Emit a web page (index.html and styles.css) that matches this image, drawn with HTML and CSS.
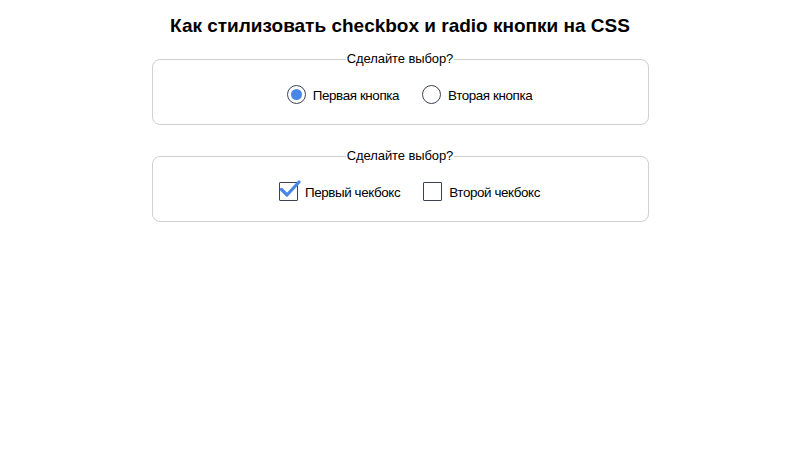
FILE: index.html
```html
<!DOCTYPE html>
<html lang="ru">
<head>
<meta charset="utf-8">
<title>Checkbox и radio</title>
<link rel="stylesheet" href="styles.css">
</head>
<body>
<h1 class="title">Как стилизовать checkbox и radio кнопки на CSS</h1>
<fieldset class="group">
  <legend class="legend">Сделайте выбор?</legend>
  <div class="options">
    <label class="option">
      <span class="radio"><span class="dot"></span></span>
      <span class="text">Первая кнопка</span>
    </label>
    <label class="option">
      <span class="radio"></span>
      <span class="text">Вторая кнопка</span>
    </label>
  </div>
</fieldset>
<fieldset class="group">
  <legend class="legend">Сделайте выбор?</legend>
  <div class="options">
    <label class="option">
      <span class="box">
        <svg class="tick" width="22" height="20" viewBox="0 0 22 20"><path d="M2.5 10.5 L8 16 L20 3" fill="none" stroke="#4a86e8" stroke-width="3.2" stroke-linecap="round" stroke-linejoin="round"/></svg>
      </span>
      <span class="text">Первый чекбокс</span>
    </label>
    <label class="option">
      <span class="box"></span>
      <span class="text">Второй чекбокс</span>
    </label>
  </div>
</fieldset>
</body>
</html>
```
FILE: styles.css
```css
* { box-sizing: border-box; }
body {
  margin: 0;
  padding: 14px 0 0;
  font-family: "Liberation Sans", Arial, sans-serif;
  color: #000;
  background: #fff;
}
.title {
  margin: 0 0 13px;
  text-align: center;
  font-size: 19px;
  font-weight: bold;
  line-height: 24px;
}
.group {
  width: 497px;
  margin: 0 auto 23px;
  border: 1px solid #d0d0d0;
  border-radius: 8px;
  padding: 17px 0 19px;
}
.legend {
  margin: 0 auto;
  padding: 0 1px;
  font-size: 13px;
  letter-spacing: -0.1px;
  line-height: 16px;
}
.options {
  display: flex;
  justify-content: center;
  gap: 23px;
  padding-left: 19px;
}
.option {
  display: flex;
  align-items: center;
  gap: 7px;
  font-size: 13.4px;
  letter-spacing: -0.4px;
  line-height: 18px;
}
.text { padding-top: 3px; }
.radio {
  width: 19px;
  height: 19px;
  border: 1.5px solid #3c4250;
  border-radius: 50%;
  display: flex;
  align-items: center;
  justify-content: center;
}
.dot {
  width: 11px;
  height: 11px;
  border-radius: 50%;
  background: #4a86e8;
}
.box {
  position: relative;
  width: 19px;
  height: 19px;
  border: 1.5px solid #3c4250;
  border-radius: 1px;
}
.tick {
  position: absolute;
  left: -1px;
  top: -4px;
}
```
